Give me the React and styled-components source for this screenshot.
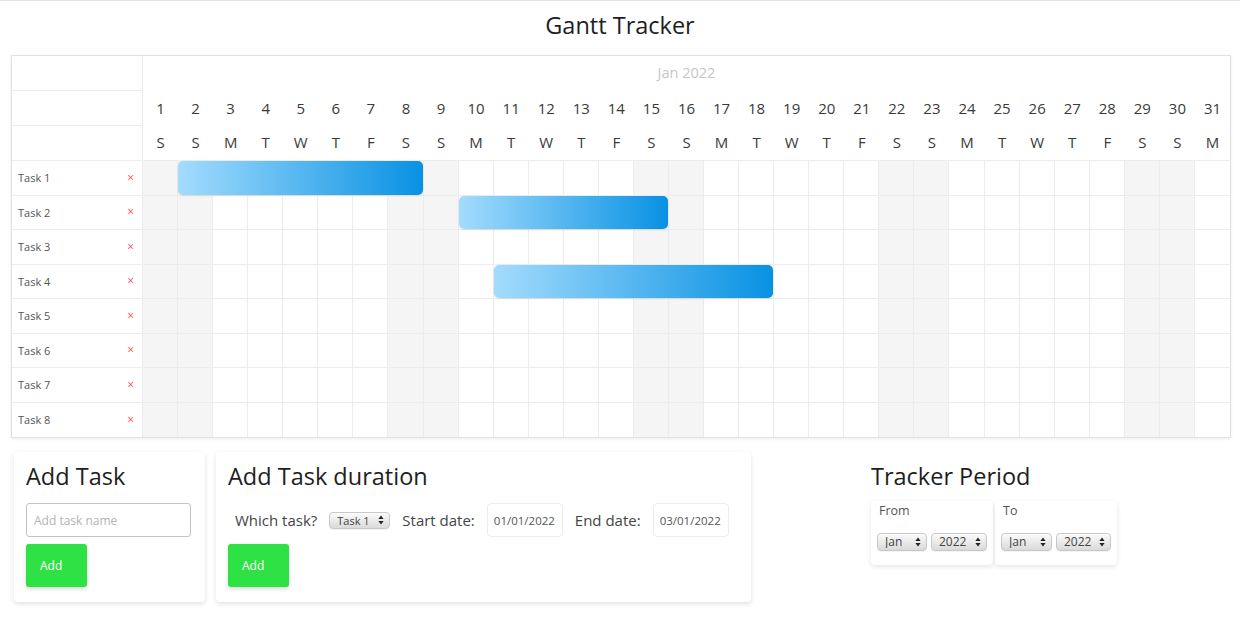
import React from "react";
import styled, { createGlobalStyle } from "styled-components";

const GlobalStyle = createGlobalStyle`
  html, body {
    margin: 0;
    padding: 0;
    background: #ffffff;
    font-family: "Open Sans", "Noto Sans", sans-serif;
    color: #222;
  }
`;

const DAYS = Array.from({ length: 31 }, (_, i) => i + 1);
const WEEKDAYS = ["S", "S", "M", "T", "W", "T", "F"];
const TASKS = ["Task 1", "Task 2", "Task 3", "Task 4", "Task 5", "Task 6", "Task 7", "Task 8"];
const DURATIONS = [
  { task: 0, start: 2, end: 8 },
  { task: 1, start: 10, end: 15 },
  { task: 3, start: 11, end: 18 },
];

const isWeekend = (day) => WEEKDAYS[(day - 1) % 7] === "S";

const Arrows = () => (
  <ArrowIcon width="6" height="10" viewBox="0 0 6 10">
    <path d="M3 0.5 L5.6 4 H0.4 Z" fill="#222" />
    <path d="M3 9.5 L5.6 6 H0.4 Z" fill="#222" />
  </ArrowIcon>
);

const Select = ({ width, height, fontSize, value, options }) => (
  <SelectWrap $w={width} $h={height}>
    <NativeSelect defaultValue={value} $fs={fontSize}>
      {options.map((o) => (
        <option key={o}>{o}</option>
      ))}
    </NativeSelect>
    <Arrows />
  </SelectWrap>
);

const App = () => {
  return (
    <Page>
      <GlobalStyle />
      <Title>Gantt Tracker</Title>
      <GridWrap>
        <Grid>
          <HeaderLabel style={{ gridRow: 1 }} />
          <HeaderLabel style={{ gridRow: 2 }} />
          <HeaderLabel style={{ gridRow: 3 }} />
          <MonthLabel>Jan 2022</MonthLabel>
          {DAYS.map((d) => (
            <DayNumber key={`n${d}`} style={{ gridColumn: d + 1 }}>
              {d}
            </DayNumber>
          ))}
          {DAYS.map((d) => (
            <DayLetter key={`l${d}`} style={{ gridColumn: d + 1 }}>
              {WEEKDAYS[(d - 1) % 7]}
            </DayLetter>
          ))}
          {TASKS.map((t, ti) => (
            <React.Fragment key={t}>
              <TaskLabel style={{ gridRow: ti + 4 }} $last={ti === TASKS.length - 1}>
                <span>{t}</span>
                <DeleteMark>×</DeleteMark>
              </TaskLabel>
              {DAYS.map((d) => (
                <DayCell
                  key={d}
                  style={{ gridRow: ti + 4, gridColumn: d + 1 }}
                  $weekend={isWeekend(d)}
                  $lastCol={d === 31}
                  $lastRow={ti === TASKS.length - 1}
                />
              ))}
            </React.Fragment>
          ))}
          {DURATIONS.map((b) => (
            <Bar
              key={b.task}
              style={{ gridRow: b.task + 4, gridColumn: `${b.start + 1} / ${b.end + 2}` }}
            />
          ))}
        </Grid>
      </GridWrap>

      <Bottom>
        <Card $width="191px">
          <CardTitle>Add Task</CardTitle>
          <TextInput placeholder="Add task name" />
          <AddButton>Add</AddButton>
        </Card>
        <Card $width="535px">
          <CardTitle>Add Task duration</CardTitle>
          <FieldRow>
            <FieldLabel>Which task?</FieldLabel>
            <Select width="61px" height="17px" fontSize="11px" value="Task 1" options={TASKS} />
            <FieldLabel>Start date:</FieldLabel>
            <DateBox readOnly value="01/01/2022" />
            <FieldLabel>End date:</FieldLabel>
            <DateBox readOnly value="03/01/2022" />
          </FieldRow>
          <AddButton>Add</AddButton>
        </Card>
        <Period>
          <PeriodInner>
            <CardTitle>Tracker Period</CardTitle>
            <PeriodRow>
              <PeriodBox>
                <PeriodLabel>From</PeriodLabel>
                <SelectPair>
                  <Select width="50px" height="18px" fontSize="12px" value="Jan" options={["Jan"]} />
                  <Select width="56px" height="18px" fontSize="12px" value="2022" options={["2022"]} />
                </SelectPair>
              </PeriodBox>
              <PeriodBox>
                <PeriodLabel>To</PeriodLabel>
                <SelectPair>
                  <Select width="51px" height="18px" fontSize="12px" value="Jan" options={["Jan"]} />
                  <Select width="55px" height="18px" fontSize="12px" value="2022" options={["2022"]} />
                </SelectPair>
              </PeriodBox>
            </PeriodRow>
          </PeriodInner>
        </Period>
      </Bottom>
    </Page>
  );
};

const Page = styled.div`
  border-top: 1px solid #e4e4e4;
  min-height: 624px;
`;

const Title = styled.h1`
  margin: 0;
  height: 54px;
  display: flex;
  align-items: center;
  justify-content: center;
  font-size: 23.5px;
  font-weight: 400;
  color: #1e1e1e;
  padding-bottom: 6px;
  box-sizing: border-box;
`;

const GridWrap = styled.div`
  padding: 0 9px 0 11px;
`;

const Grid = styled.div`
  display: grid;
  grid-template-columns: 131px repeat(31, 1fr);
  grid-template-rows: repeat(3, 35px) repeat(8, 34.5px);
  border: 1px solid #e2e2e2;
  box-shadow: 0 1px 3px rgba(0, 0, 0, 0.08);
  background: #fff;
`;

const HeaderLabel = styled.div`
  grid-column: 1;
  border-bottom: 1px solid #ececec;
  border-right: 1px solid #ececec;
`;

const MonthLabel = styled.div`
  grid-row: 1;
  grid-column: 2 / span 31;
  display: flex;
  align-items: center;
  justify-content: center;
  font-size: 14.5px;
  color: #c6c6c6;
  padding-bottom: 2px;
`;

const DayNumber = styled.div`
  grid-row: 2;
  display: flex;
  align-items: center;
  justify-content: center;
  font-size: 15px;
  color: #3a3a3a;
  padding-bottom: 2px;
`;

const DayLetter = styled(DayNumber)`
  grid-row: 3;
  border-bottom: 1px solid #ececec;
`;

const TaskLabel = styled.div`
  grid-column: 1;
  display: flex;
  align-items: center;
  justify-content: space-between;
  padding: 0 8px 0 6px;
  font-size: 11px;
  color: #555;
  border-right: 1px solid #ececec;
  border-bottom: ${({ $last }) => ($last ? "none" : "1px solid #ececec")};
`;

const DeleteMark = styled.span`
  color: #ff4d4d;
  font-size: 12px;
  line-height: 1;
`;

const DayCell = styled.div`
  background: ${({ $weekend }) => ($weekend ? "#f5f5f5" : "#fff")};
  border-right: ${({ $lastCol }) => ($lastCol ? "none" : "1px solid #ececec")};
  border-bottom: ${({ $lastRow }) => ($lastRow ? "none" : "1px solid #ececec")};
`;

const Bar = styled.div`
  z-index: 1;
  margin: 0 1px 1px 0;
  border-radius: 5px;
  background: linear-gradient(to right, #a3dcfd, #0891e3);
  box-shadow: 0 1px 2px rgba(0, 0, 0, 0.1);
`;

const Bottom = styled.div`
  display: flex;
  align-items: flex-start;
  gap: 11px;
  padding: 14px 0 0 14px;
`;

const Card = styled.div`
  width: ${({ $width }) => $width};
  height: 150px;
  box-sizing: border-box;
  padding: 11px 12px 0 12px;
  background: #fff;
  border-radius: 4px;
  box-shadow: 0 2px 5px rgba(0, 0, 0, 0.12);
  display: flex;
  flex-direction: column;
  align-items: flex-start;
`;

const CardTitle = styled.h2`
  margin: 0 0 14px;
  font-size: 23.5px;
  font-weight: 400;
  color: #1e1e1e;
  line-height: 26px;
`;

const TextInput = styled.input`
  width: 165px;
  height: 34px;
  box-sizing: border-box;
  border: 1px solid #c4c4c4;
  border-radius: 3px;
  padding: 0 7px;
  font-family: inherit;
  font-size: 12px;
  &::placeholder {
    color: #b3b3b3;
  }
`;

const AddButton = styled.button`
  margin-top: 7px;
  width: 61px;
  height: 43px;
  border: none;
  border-radius: 3px;
  background: #2ee144;
  color: #fff;
  font-family: inherit;
  font-size: 12px;
  text-align: left;
  padding: 0 14px;
  box-shadow: 0 2px 4px rgba(0, 0, 0, 0.15);
`;

const FieldRow = styled.div`
  display: flex;
  align-items: center;
  gap: 12px;
  padding-left: 7px;
  height: 34px;
`;

const FieldLabel = styled.span`
  font-size: 15px;
  color: #444;
`;

const SelectWrap = styled.span`
  position: relative;
  display: inline-flex;
  width: ${({ $w }) => $w};
  height: ${({ $h }) => $h};
`;

const NativeSelect = styled.select`
  appearance: none;
  -webkit-appearance: none;
  width: 100%;
  height: 100%;
  box-sizing: border-box;
  margin: 0;
  padding: 0 0 0 7px;
  border: 1px solid #c8c8c8;
  border-radius: 4px;
  background: linear-gradient(#fbfbfb, #dadada);
  box-shadow: inset 0 1px 0 #fff, 0 1px 1px rgba(0, 0, 0, 0.05);
  font-family: inherit;
  font-size: ${({ $fs }) => $fs};
  color: #444;
  line-height: 1;
`;

const ArrowIcon = styled.svg`
  position: absolute;
  right: 6px;
  top: 50%;
  transform: translateY(-50%);
  pointer-events: none;
`;

const DateBox = styled.input`
  width: 76px;
  height: 34px;
  box-sizing: border-box;
  border: 1px solid #ececec;
  border-radius: 4px;
  padding: 0 6px;
  font-family: inherit;
  font-size: 11.5px;
  color: #555;
`;

const Period = styled.div`
  flex: 1;
  display: flex;
  justify-content: center;
  padding-right: 14px;
`;

const PeriodInner = styled.div`
  padding-top: 11px;
  display: flex;
  flex-direction: column;
  align-items: flex-start;
`;

const PeriodRow = styled.div`
  display: flex;
  gap: 2px;
  margin-top: -2px;
`;

const PeriodBox = styled.div`
  padding: 0 6px 14px 6px;
  border-radius: 4px;
  box-shadow: 0 2px 5px rgba(0, 0, 0, 0.1);
  background: #fff;
`;

const PeriodLabel = styled.div`
  font-size: 12.5px;
  color: #555;
  padding-left: 2px;
  height: 20px;
  line-height: 20px;
`;

const SelectPair = styled.div`
  display: flex;
  gap: 4px;
  margin-top: 12px;
`;

export default App;
